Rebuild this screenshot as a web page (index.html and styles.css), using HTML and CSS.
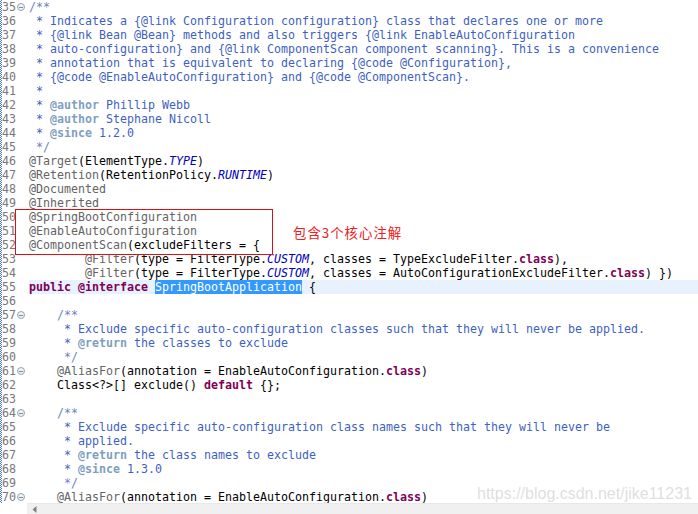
FILE: index.html
```html
<!DOCTYPE html>
<html lang="zh">
<head>
    <meta charset="UTF-8">
    <title>SpringBootApplication.java</title>
    <link rel="stylesheet" href="styles.css">
</head>
<body>
    <div class="page">
        <div class="editor">
            <div class="marker"></div>
            <div class="lines">
                <div class="row"><span class="num"><span class="digits">35</span><span class="fold"></span></span><span class="src"><span class="jd-start">/**</span></span></div>
                <div class="row"><span class="num"><span class="digits">36</span></span><span class="src jd"> * Indicates a {@link Configuration configuration} class that declares one or more</span></div>
                <div class="row"><span class="num"><span class="digits">37</span></span><span class="src jd"> * {@link Bean @Bean} methods and also triggers {@link EnableAutoConfiguration</span></div>
                <div class="row"><span class="num"><span class="digits">38</span></span><span class="src jd"> * auto-configuration} and {@link ComponentScan component scanning}. This is a convenience</span></div>
                <div class="row"><span class="num"><span class="digits">39</span></span><span class="src jd"> * annotation that is equivalent to declaring {@code @Configuration},</span></div>
                <div class="row"><span class="num"><span class="digits">40</span></span><span class="src jd"> * {@code @EnableAutoConfiguration} and {@code @ComponentScan}.</span></div>
                <div class="row"><span class="num"><span class="digits">41</span></span><span class="src jd"> *</span></div>
                <div class="row"><span class="num"><span class="digits">42</span></span><span class="src jd"> * <b class="tag">@author</b> Phillip Webb</span></div>
                <div class="row"><span class="num"><span class="digits">43</span></span><span class="src jd"> * <b class="tag">@author</b> Stephane Nicoll</span></div>
                <div class="row"><span class="num"><span class="digits">44</span></span><span class="src jd"> * <b class="tag">@since</b> 1.2.0</span></div>
                <div class="row"><span class="num"><span class="digits">45</span></span><span class="src jd"> <span class="jd-start">*/</span></span></div>
                <div class="row"><span class="num"><span class="digits">46</span></span><span class="src"><span class="ann">@Target</span>(ElementType.<i class="const">TYPE</i>)</span></div>
                <div class="row"><span class="num"><span class="digits">47</span></span><span class="src"><span class="ann">@Retention</span>(RetentionPolicy.<i class="const">RUNTIME</i>)</span></div>
                <div class="row"><span class="num"><span class="digits">48</span></span><span class="src"><span class="ann">@Documented</span></span></div>
                <div class="row"><span class="num"><span class="digits">49</span></span><span class="src"><span class="ann">@Inherited</span></span></div>
                <div class="row"><span class="num"><span class="digits">50</span></span><span class="src"><span class="ann">@SpringBootConfiguration</span></span></div>
                <div class="row"><span class="num"><span class="digits">51</span></span><span class="src"><span class="ann">@EnableAutoConfiguration</span></span></div>
                <div class="row"><span class="num"><span class="digits">52</span></span><span class="src"><span class="ann">@ComponentScan</span>(excludeFilters = {</span></div>
                <div class="row"><span class="num"><span class="digits">53</span></span><span class="src">        <span class="ann">@Filter</span>(type = FilterType.<i class="const">CUSTOM</i>, classes = TypeExcludeFilter.<b class="kw">class</b>),</span></div>
                <div class="row"><span class="num"><span class="digits">54</span></span><span class="src">        <span class="ann">@Filter</span>(type = FilterType.<i class="const">CUSTOM</i>, classes = AutoConfigurationExcludeFilter.<b class="kw">class</b>) })</span></div>
                <div class="row current"><span class="num"><span class="digits">55</span></span><span class="src"><b class="kw">public</b> <b class="kw">@interface</b> <span class="sel">SpringBootApplication</span> {</span></div>
                <div class="row"><span class="num"><span class="digits">56</span></span><span class="src"></span></div>
                <div class="row"><span class="num"><span class="digits">57</span><span class="fold"></span></span><span class="src">    <span class="jd-start">/**</span></span></div>
                <div class="row"><span class="num"><span class="digits">58</span></span><span class="src jd">     * Exclude specific auto-configuration classes such that they will never be applied.</span></div>
                <div class="row"><span class="num"><span class="digits">59</span></span><span class="src jd">     * <b class="tag">@return</b> the classes to exclude</span></div>
                <div class="row"><span class="num"><span class="digits">60</span></span><span class="src jd">     <span class="jd-start">*/</span></span></div>
                <div class="row"><span class="num"><span class="digits">61</span><span class="fold"></span></span><span class="src">    <span class="ann">@AliasFor</span>(annotation = EnableAutoConfiguration.<b class="kw">class</b>)</span></div>
                <div class="row"><span class="num"><span class="digits">62</span></span><span class="src">    Class&lt;?&gt;[] exclude() <b class="kw">default</b> {};</span></div>
                <div class="row"><span class="num"><span class="digits">63</span></span><span class="src"></span></div>
                <div class="row"><span class="num"><span class="digits">64</span><span class="fold"></span></span><span class="src">    <span class="jd-start">/**</span></span></div>
                <div class="row"><span class="num"><span class="digits">65</span></span><span class="src jd">     * Exclude specific auto-configuration class names such that they will never be</span></div>
                <div class="row"><span class="num"><span class="digits">66</span></span><span class="src jd">     * applied.</span></div>
                <div class="row"><span class="num"><span class="digits">67</span></span><span class="src jd">     * <b class="tag">@return</b> the class names to exclude</span></div>
                <div class="row"><span class="num"><span class="digits">68</span></span><span class="src jd">     * <b class="tag">@since</b> 1.3.0</span></div>
                <div class="row"><span class="num"><span class="digits">69</span></span><span class="src jd">     <span class="jd-start">*/</span></span></div>
                <div class="row"><span class="num"><span class="digits">70</span><span class="fold"></span></span><span class="src">    <span class="ann">@AliasFor</span>(annotation = EnableAutoConfiguration.<b class="kw">class</b>)</span></div>
            </div>
        </div>
        <div class="hscroll">
            <svg class="arrow" width="5" height="7" viewBox="0 0 5 7"><path d="M4.5 0 L0.5 3.5 L4.5 7 Z" fill="#808080"/></svg>
        </div>

        <!-- annotations drawn over the screenshot -->
        <div class="callout"></div>
        <div class="callout-note">包含3个核心注解</div>
        <div class="watermark">https://blog.csdn.net/jike11231</div>
    </div>
</body>
</html>
```
FILE: styles.css
```css
body {
    margin: 0;
    background-color: #fff;
}

.page {
    position: relative;
    width: 698px;
    height: 514px;
    overflow: hidden;
    background-color: #fff;
}

.editor {
    display: flex;
    height: 503px;
    overflow: hidden;
}

.marker {
    width: 2px;
    flex: none;
    background-color: #fff;
    background-image: conic-gradient(#4a78d8 25%, #fff 0 50%, #4a78d8 0 75%, #fff 0);
    background-size: 2px 2px;
}

.lines {
    flex: 1;
    font-family: "DejaVu Sans Mono", "Liberation Mono", monospace;
    font-size: 11.63px;
    color: #000;
}

.row {
    display: flex;
    height: 14px;
    line-height: 14px;
    white-space: pre;
}

.num {
    display: flex;
    align-items: center;
    width: 27px;
    flex: none;
    color: #787878;
}

.digits {
    width: 15px;
}

.fold {
    width: 6px;
    height: 6px;
    border: 1px solid #98a6b6;
    border-radius: 50%;
    background: #eef1f5 linear-gradient(#7d8a99, #7d8a99) center / 4px 1px no-repeat;
}

.src {
    flex: 1;
}

.row.current .src {
    background-color: #e8f2fe;
}

.jd {
    color: #3f5fbf;
}

.jd-start {
    color: #6f82bf;
}

.tag {
    color: #7f9fbf;
    font-weight: bold;
}

.ann {
    color: #646464;
}

.kw {
    color: #7f0055;
    font-weight: bold;
}

.const {
    color: #0000c0;
    font-style: italic;
}

.sel {
    background-color: #3399ff;
    color: #fff;
}

.hscroll {
    display: flex;
    align-items: center;
    height: 11px;
    margin-left: 27px;
    padding-left: 5px;
    background-color: #f0f0f0;
    border-top: 1px solid #e8e8e8;
    box-sizing: border-box;
}

.callout {
    position: absolute;
    left: 15px;
    top: 209px;
    width: 256px;
    height: 44px;
    border: 1px solid #e01010;
}

.callout-note {
    position: absolute;
    left: 293px;
    top: 224px;
    font-family: "Noto Sans CJK SC", sans-serif;
    font-size: 13.4px;
    letter-spacing: 1px;
    line-height: 17px;
    color: #f02020;
}

.watermark {
    position: absolute;
    left: 477px;
    top: 484px;
    font-family: "Liberation Sans", Arial, sans-serif;
    font-size: 16px;
    line-height: 19px;
    color: rgba(205, 205, 205, 0.65);
}
```
